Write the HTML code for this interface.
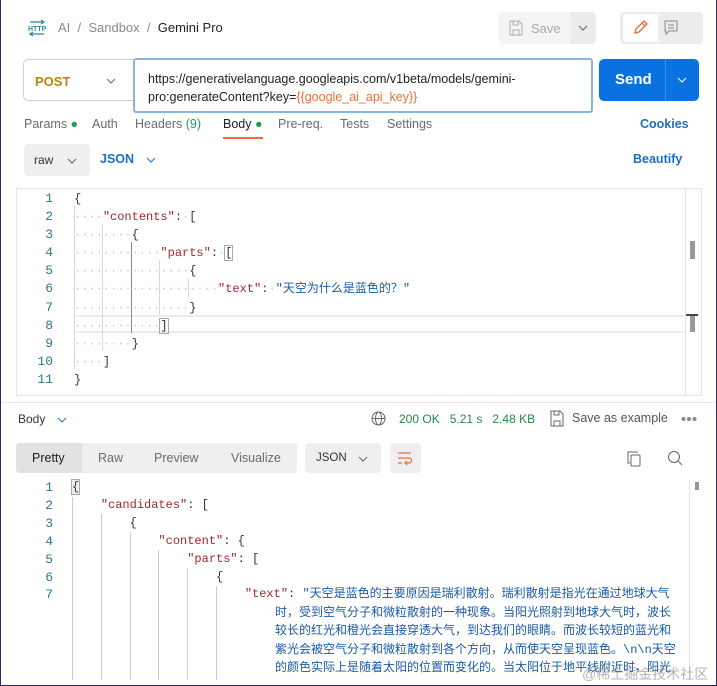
<!DOCTYPE html>
<html><head><meta charset="utf-8"><style>
*{margin:0;padding:0;box-sizing:border-box}
body{width:717px;height:686px;overflow:hidden;background:#fff;font-family:"Liberation Sans","Noto Sans CJK SC",sans-serif;position:relative;color:#212121}
.frame{position:absolute;left:0;top:0;width:717px;height:686px;border:1px solid #2d2a5a;border-top:none;pointer-events:none}
.a{position:absolute;white-space:nowrap}
.mono{font-family:"Liberation Mono","Noto Sans CJK SC",monospace;font-size:12px}
.ln{position:absolute;width:30px;text-align:right;color:#2a7a8a;font-family:"Liberation Mono",monospace;font-size:13px}
.k{color:#a3262c}.s{color:#1a5aa8}.p{color:#333}
.dots{color:#ccc}
.g{position:absolute;width:1px;background:#d8d8d8}
.cv{position:absolute}
</style></head><body>
<!-- header -->
<svg class="a" style="left:27px;top:19px" width="20" height="18" viewBox="0 0 20 18"><path d="M3 3h14M14 1l3 2-3 2M17 15H3M6 13l-3 2 3 2" stroke="#2a8a9a" fill="none" stroke-width="1.2"/><text x="1" y="12" font-size="7" font-family="Liberation Sans" font-weight="bold" fill="#2a8a9a">HTTP</text></svg>
<div class="a" style="left:58px;top:20px;font-size:13px;color:#8a8a8a">AI &nbsp;/&nbsp; Sandbox &nbsp;/&nbsp; <span style="color:#212121">Gemini Pro</span></div>
<div class="a" style="left:499px;top:12px;width:97px;height:32px;background:#f4f4f4;border-radius:4px"></div>
<div class="a" style="left:570px;top:12px;width:26px;height:32px;background:#ebebeb;border-radius:0 4px 4px 0"></div>
<svg class="a" style="left:509px;top:20px" width="14" height="16"><path d="M1 1h9l3 3v11H1z M4 1v4h5V1 M4 15v-5h6v5" stroke="#aaa" fill="none"/></svg>
<div class="a" style="left:531px;top:21px;font-size:13px;color:#aaa">Save</div>
<svg class="cv" style="left:578px;top:25px" width="10" height="6"><path d="M1 1l4 4 4-4" stroke="#666" fill="none"/></svg>
<div class="a" style="left:620px;top:12px;width:83px;height:32px;background:#ececec;border-radius:4px"></div>
<div class="a" style="left:623px;top:14px;width:35px;height:28px;background:#fff;border-radius:3px"></div>
<svg class="a" style="left:632px;top:19px" width="16" height="17"><path d="M3 14l1-4 8-8 3 3-8 8z M10 4l3 3" stroke="#e06a3a" fill="none" stroke-width="1.3"/></svg>
<svg class="a" style="left:663px;top:20px" width="16" height="16"><path d="M2 1h12v10H6l-3 3v-3H2z M5 5h6M5 8h6" stroke="#888" fill="none"/></svg>
<!-- url bar -->
<div class="a" style="left:23px;top:59px;width:115px;height:42px;border:1px solid #cfcfcf;border-radius:5px 0 0 5px"></div>
<div class="a" style="left:35px;top:74px;font-size:13px;font-weight:bold;color:#b8860b">POST</div>
<svg class="cv" style="left:106px;top:78px" width="10" height="6"><path d="M1 1l4 4 4-4" stroke="#666" fill="none"/></svg>
<div class="a" style="left:133px;top:58px;width:460px;height:55px;border:2px solid #8ab4e8;border-radius:3px;background:#fff"></div>
<div class="a" style="left:148px;top:70px;font-size:12.5px;line-height:18px;color:#212121">https://generativelanguage.googleapis.com/v1beta/models/gemini-<br>pro:generateContent?key=<span style="color:#e8703a">{{google_ai_api_key}}</span></div>
<div class="a" style="left:599px;top:59px;width:100px;height:42px;background:#0a72e0;border-radius:5px"></div>
<div class="a" style="left:665px;top:59px;width:1px;height:42px;background:#3f8ee8"></div>
<div class="a" style="left:615px;top:71px;font-size:15px;font-weight:bold;color:#fff">Send</div>
<svg class="cv" style="left:677px;top:77px" width="10" height="6"><path d="M1 1l4 4 4-4" stroke="#fff" fill="none"/></svg>
<!-- tabs -->
<div class="a" style="left:24px;top:117px;font-size:12.5px;color:#6b6b6b">Params <span style="color:#1f9d55">●</span></div>
<div class="a" style="left:92px;top:117px;font-size:12.5px;color:#6b6b6b">Auth</div>
<div class="a" style="left:135px;top:117px;font-size:12.5px;color:#6b6b6b">Headers <span style="color:#1f9d55">(9)</span></div>
<div class="a" style="left:223px;top:117px;font-size:12.5px;color:#212121">Body <span style="color:#1f9d55">●</span></div>
<div class="a" style="left:223px;top:137px;width:40px;height:2px;background:#e8703a"></div>
<div class="a" style="left:278px;top:117px;font-size:12.5px;color:#6b6b6b">Pre-req.</div>
<div class="a" style="left:340px;top:117px;font-size:12.5px;color:#6b6b6b">Tests</div>
<div class="a" style="left:387px;top:117px;font-size:12.5px;color:#6b6b6b">Settings</div>
<div class="a" style="left:640px;top:117px;font-size:12.5px;font-weight:bold;color:#1a6fc4">Cookies</div>
<div class="a" style="left:24px;top:144px;width:66px;height:32px;background:#efefef;border-radius:4px"></div>
<div class="a" style="left:34px;top:153px;font-size:12px;color:#333">raw</div>
<svg class="cv" style="left:67px;top:158px" width="10" height="6"><path d="M1 1l4 4 4-4" stroke="#666" fill="none"/></svg>
<div class="a" style="left:100px;top:152px;font-size:12.5px;font-weight:bold;color:#1a6fc4">JSON</div>
<svg class="cv" style="left:146px;top:157px" width="10" height="6"><path d="M1 1l4 4 4-4" stroke="#1a6fc4" fill="none"/></svg>
<div class="a" style="left:633px;top:152px;font-size:12.5px;font-weight:bold;color:#1a6fc4">Beautify</div>
<!-- request editor -->
<div class="a" style="left:16px;top:188px;width:686px;height:208px;border:1px solid #e4e4e4"></div>
<div class="a" style="left:685px;top:189px;width:1px;height:206px;background:#e4e4e4"></div>
<div class="a" style="left:690px;top:241px;width:5px;height:18px;background:#999"></div>
<div class="a" style="left:686px;top:314px;width:12px;height:2px;background:#444"></div>
<div class="a" style="left:690px;top:316px;width:5px;height:16px;background:#999"></div>
<div class="a" style="left:74px;top:315px;width:611px;height:18px;border-top:2px solid #ececec;border-bottom:2px solid #ececec"></div>
<div class="g" style="left:74px;top:206px;height:163px"></div>
<div class="g" style="left:102px;top:224px;height:127px"></div>
<div class="g" style="left:131px;top:242px;height:91px;background:#888"></div>
<div class="g" style="left:159px;top:260px;height:55px"></div>
<div class="g" style="left:188px;top:278px;height:20px"></div>
<div class="ln" style="left:23px;top:190px;line-height:18.1px">1<br>2<br>3<br>4<br>5<br>6<br>7<br>8<br>9<br>10<br>11</div>
<div class="a mono" style="left:74px;top:190px;line-height:18.1px;color:#333">{<br><span class="dots">····</span><span class="k">"contents"</span>:<span class="dots">·</span>[<br><span class="dots">········</span>{<br><span class="dots">············</span><span class="k">"parts"</span>:<span class="dots">·</span><span style="outline:1px solid #aaa">[</span><br><span class="dots">················</span>{<br><span class="dots">····················</span><span class="k">"text"</span>:<span class="dots">·</span><span class="s">"天空为什么是蓝色的？"</span><br><span class="dots">················</span>}<br><span class="dots">············</span><span style="outline:1px solid #aaa">]</span><br><span class="dots">········</span>}<br><span class="dots">····</span>]<br>}</div>
<!-- response bar -->
<div class="a" style="left:0;top:402px;width:717px;height:1px;background:#e8e8e8"></div>
<div class="a" style="left:18px;top:412px;font-size:12px;color:#333">Body</div>
<svg class="cv" style="left:57px;top:417px" width="10" height="6"><path d="M1 1l4 4 4-4" stroke="#1a6fc4" fill="none"/></svg>
<svg class="a" style="left:371px;top:411px" width="15" height="15"><circle cx="7.5" cy="7.5" r="6.5" stroke="#666" fill="none"/><ellipse cx="7.5" cy="7.5" rx="3" ry="6.5" stroke="#666" fill="none"/><path d="M1 7.5h13" stroke="#666"/></svg>
<div class="a" style="left:399px;top:412px;font-size:12px;color:#1f8a4c">200 OK &nbsp;&nbsp;5.21 s &nbsp;&nbsp;2.48 KB</div>
<svg class="a" style="left:550px;top:410px" width="14" height="17"><path d="M1 1h9l3 3v12H1z M4 1v4h5V1 M4 16v-5h6v5" stroke="#666" fill="none"/></svg>
<div class="a" style="left:572px;top:411px;font-size:12.5px;color:#555">Save as example</div>
<svg class="a" style="left:681px;top:416px" width="16" height="6"><circle cx="2.5" cy="3" r="2" fill="#888"/><circle cx="8" cy="3" r="2" fill="#888"/><circle cx="13.5" cy="3" r="2" fill="#888"/></svg>
<div class="a" style="left:16px;top:443px;width:281px;height:30px;background:#efefef;border-radius:4px"></div>
<div class="a" style="left:16px;top:443px;width:66px;height:30px;background:#e2e2e2;border-radius:4px 0 0 4px"></div>
<div class="a" style="left:32px;top:451px;font-size:12.5px;color:#212121">Pretty</div>
<div class="a" style="left:98px;top:451px;font-size:12.5px;color:#6b6b6b">Raw</div>
<div class="a" style="left:154px;top:451px;font-size:12.5px;color:#6b6b6b">Preview</div>
<div class="a" style="left:231px;top:451px;font-size:12.5px;color:#6b6b6b">Visualize</div>
<div class="a" style="left:305px;top:443px;width:76px;height:30px;background:#efefef;border-radius:4px"></div>
<div class="a" style="left:316px;top:452px;font-size:11.5px;color:#333">JSON</div>
<svg class="cv" style="left:358px;top:456px" width="10" height="6"><path d="M1 1l4 4 4-4" stroke="#666" fill="none"/></svg>
<div class="a" style="left:390px;top:443px;width:31px;height:30px;background:#efefef;border-radius:4px"></div>
<svg class="a" style="left:397px;top:450px" width="16" height="16"><path d="M1 3h13M1 8h11a2.5 2.5 0 0 1 0 5H8M10 11l-2 2 2 2M1 13h4" stroke="#e8703a" fill="none" stroke-width="1.2"/></svg>
<svg class="a" style="left:627px;top:451px" width="14" height="16"><rect x="4" y="4" width="9" height="11" rx="1" stroke="#666" fill="none"/><path d="M10 2V1H1v11h2" stroke="#666" fill="none"/></svg>
<svg class="a" style="left:667px;top:450px" width="16" height="16"><circle cx="7" cy="7" r="5.5" stroke="#666" fill="none"/><path d="M11 11l4 4" stroke="#666"/></svg>
<!-- response code -->
<div class="a" style="left:689px;top:480px;width:1px;height:200px;background:#e4e4e4"></div>
<div class="a" style="left:695px;top:482px;width:4px;height:8px;background:#999"></div>
<div class="g" style="left:72px;top:497px;height:185px;background:#ccc"></div>
<div class="g" style="left:101px;top:514px;height:168px;background:#ccc"></div>
<div class="g" style="left:130px;top:532px;height:150px;background:#ccc"></div>
<div class="g" style="left:158px;top:550px;height:132px;background:#ccc"></div>
<div class="g" style="left:187px;top:568px;height:114px;background:#ccc"></div>
<div class="g" style="left:216px;top:586px;height:96px;background:#ccc"></div>
<div class="ln" style="left:23px;top:479px;line-height:17.9px">1<br>2<br>3<br>4<br>5<br>6<br>7</div>
<div class="a mono" style="left:72px;top:479px;line-height:17.9px;color:#333"><span style="outline:1px solid #aaa;background:#eee">{</span><br>&nbsp;&nbsp;&nbsp;&nbsp;<span class="k">"candidates"</span>: [<br>&nbsp;&nbsp;&nbsp;&nbsp;&nbsp;&nbsp;&nbsp;&nbsp;{<br>&nbsp;&nbsp;&nbsp;&nbsp;&nbsp;&nbsp;&nbsp;&nbsp;&nbsp;&nbsp;&nbsp;&nbsp;<span class="k">"content"</span>: {<br>&nbsp;&nbsp;&nbsp;&nbsp;&nbsp;&nbsp;&nbsp;&nbsp;&nbsp;&nbsp;&nbsp;&nbsp;&nbsp;&nbsp;&nbsp;&nbsp;<span class="k">"parts"</span>: [<br>&nbsp;&nbsp;&nbsp;&nbsp;&nbsp;&nbsp;&nbsp;&nbsp;&nbsp;&nbsp;&nbsp;&nbsp;&nbsp;&nbsp;&nbsp;&nbsp;&nbsp;&nbsp;&nbsp;&nbsp;{<br>&nbsp;&nbsp;&nbsp;&nbsp;&nbsp;&nbsp;&nbsp;&nbsp;&nbsp;&nbsp;&nbsp;&nbsp;&nbsp;&nbsp;&nbsp;&nbsp;&nbsp;&nbsp;&nbsp;&nbsp;&nbsp;&nbsp;&nbsp;&nbsp;<span class="k">"text"</span>: <span class="s">"天空是蓝色的主要原因是瑞利散射。瑞利散射是指光在通过地球大气</span></div>
<div class="a mono s" style="left:275px;top:604px;line-height:18.3px;font-size:12px">时，受到空气分子和微粒散射的一种现象。当阳光照射到地球大气时，波长<br>较长的红光和橙光会直接穿透大气，到达我们的眼睛。而波长较短的蓝光和<br>紫光会被空气分子和微粒散射到各个方向，从而使天空呈现蓝色。\n\n天空<br>的颜色实际上是随着太阳的位置而变化的。当太阳位于地平线附近时，阳光</div>
<div class="a" style="left:0;top:680px;width:717px;height:6px;background:#fff"></div>
<div class="a" style="left:582px;top:664px;font-size:14px;color:rgba(120,120,120,0.55)">@稀土掘金技术社区</div>
<div class="frame"></div>
</body></html>
